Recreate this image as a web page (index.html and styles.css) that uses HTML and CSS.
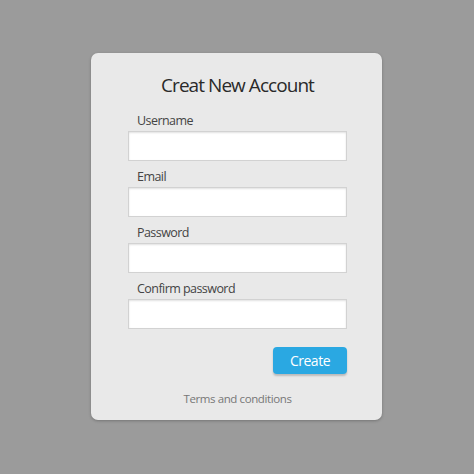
FILE: index.html
```html
<!DOCTYPE html>
<html>
<head>
<meta charset="utf-8">
<link rel="stylesheet" href="styles.css">
</head>
<body>
<div class="page">
  <form class="card">
    <h1 class="title">Creat New Account</h1>
    <div class="field">
      <label class="label">Username</label>
      <div class="input"></div>
    </div>
    <div class="field">
      <label class="label">Email</label>
      <div class="input"></div>
    </div>
    <div class="field">
      <label class="label">Password</label>
      <div class="input"></div>
    </div>
    <div class="field">
      <label class="label">Confirm password</label>
      <div class="input"></div>
    </div>
    <div class="actions">
      <button type="button" class="btn">Create</button>
    </div>
    <div class="terms">Terms and conditions</div>
  </form>
</div>
</body>
</html>
```
FILE: styles.css
```css
html, body {
  margin: 0;
  padding: 0;
  background: #9b9b9b;
}
.page {
  width: 474px;
  height: 474px;
  padding: 53px 0 0 91px;
  box-sizing: border-box;
}
.card {
  width: 291px;
  height: 367px;
  box-sizing: border-box;
  background: #e9e9e9;
  border-radius: 7px;
  box-shadow: 0 1px 3px rgba(0,0,0,0.25);
  padding: 20px 35px 0 37px;
  display: flex;
  flex-direction: column;
  font-family: "Open Sans", "Liberation Sans", sans-serif;
}
.title {
  margin: 0;
  font-size: 19px;
  line-height: 24px;
  font-weight: 400;
  color: #2a2a2a;
  text-align: center;
  letter-spacing: -0.95px;
}
.field {
  display: flex;
  flex-direction: column;
  gap: 2px;
  margin-top: 8px;
}
.field:first-of-type {
  margin-top: 16px;
}
.label {
  font-size: 12.5px;
  line-height: 16px;
  color: #444;
  padding-left: 9px;
  letter-spacing: -0.55px;
}
.input {
  height: 30px;
  box-sizing: border-box;
  background: #fff;
  border: 1px solid #d2d2d2;
  box-shadow: inset 0 1px 2px rgba(0,0,0,0.12);
}
.actions {
  display: flex;
  justify-content: flex-end;
  margin-top: 18px;
}
.btn {
  width: 74px;
  height: 27px;
  border: none;
  border-radius: 4px;
  background: #2aa8e2;
  color: #fff;
  font-family: "Open Sans", "Liberation Sans", sans-serif;
  font-size: 14px;
  letter-spacing: -0.5px;
  padding: 0;
  box-shadow: 0 2px 2px rgba(0,0,0,0.2);
}
.terms {
  margin-top: 17px;
  font-size: 11.5px;
  line-height: 16px;
  color: #777;
  text-align: center;
  letter-spacing: -0.4px;
}
```
